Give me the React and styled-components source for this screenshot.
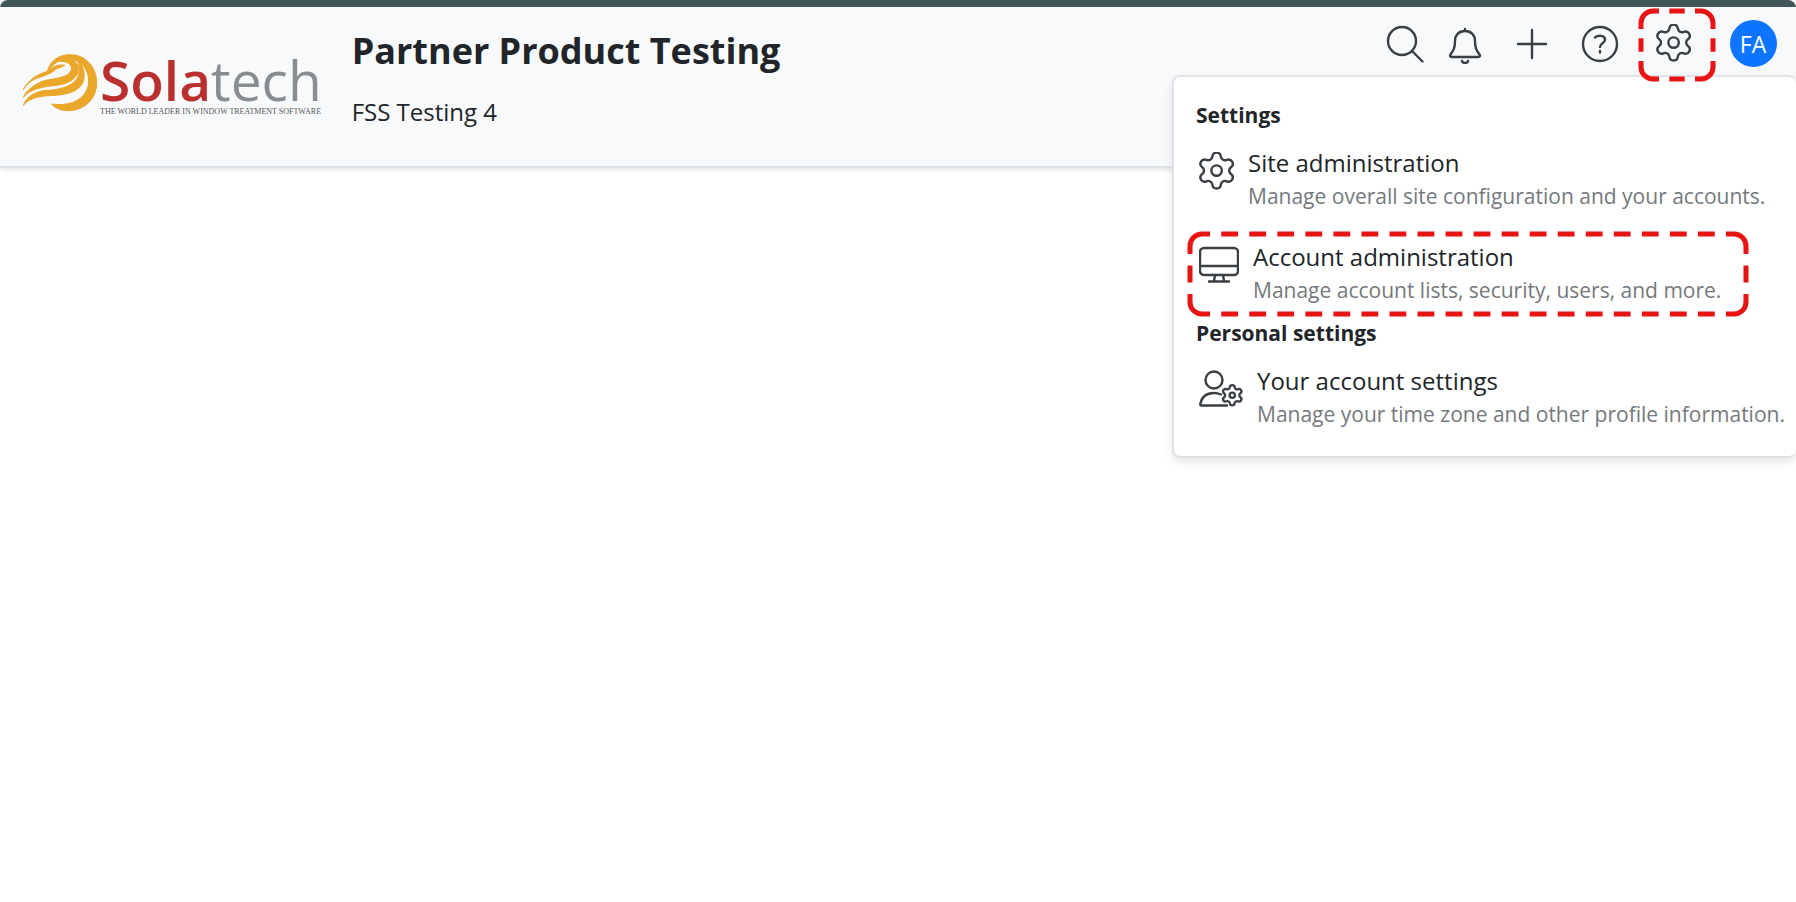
import React, { useState } from "react";
import styled, { createGlobalStyle } from "styled-components";

const GEAR =
  "M9.671 4.136a2.34 2.34 0 0 1 4.659 0 2.34 2.34 0 0 0 3.319 1.915 2.34 2.34 0 0 1 2.33 4.033 2.34 2.34 0 0 0 0 3.831 2.34 2.34 0 0 1-2.33 4.033 2.34 2.34 0 0 0-3.319 1.915 2.34 2.34 0 0 1-4.659 0 2.34 2.34 0 0 0-3.32-1.915 2.34 2.34 0 0 1-2.33-4.033 2.34 2.34 0 0 0 0-3.831A2.34 2.34 0 0 1 6.35 6.051a2.34 2.34 0 0 0 3.319-1.915";

const Icon = ({ width = 40, height = 40, children }) => (
  <Svg width={width} height={height} viewBox={`0 0 ${width} ${height}`} aria-hidden="true">
    {children}
  </Svg>
);

const SearchIcon = () => (
  <Icon>
    <circle cx="17" cy="17" r="14" />
    <path d="M27 27l10.500 10.500" />
  </Icon>
);

const BellIcon = () => (
  <Icon>
    <path d="M19 7c-6.500 0-10 4.500-10 10 0 7-1.500 9.500-4.500 13.500-1 1.500-.5 2.500 1.200 2.500h26.600c1.700 0 2.200-1 1.200-2.500-3-4-4.500-6.500-4.500-13.500 0-5.500-3.500-10-10-10zM19 7V5" />
    <path d="M16 37c.5 2.700 5.500 2.700 6 0" />
  </Icon>
);

const PlusIcon = () => (
  <Icon>
    <path d="M19 6v28M5 20h28" />
  </Icon>
);

const HelpIcon = () => (
  <Icon>
    <circle cx="19" cy="20" r="17" />
    <path d="M14 13.500c3-2.500 10-2.500 10 2 0 4-5 3.500-5 7.500" />
    <path d="M19 27v1.500" />
  </Icon>
);

const GearIcon = () => (
  <Icon width={35} height={40}>
    <g transform="translate(-4 -3) scale(1.800)" strokeWidth="1.350">
      <path d={GEAR} />
      <circle cx="12" cy="12" r="2.900" />
    </g>
  </Icon>
);

const MonitorIcon = () => (
  <Icon width={40}>
    <rect x="1" y="2" width="38" height="27" rx="4" />
    <path d="M1 20h38M16 29l-1 6M24 29l1 6M10 35.500h20" />
  </Icon>
);

const UserGearIcon = () => (
  <Icon width={44}>
    <circle cx="15" cy="10" r="8.500" />
    <path d="M22 24.500c-2-.9-4.500-1.500-7-1.500-8 0-12.500 4.500-13.700 11.200-.1.800.2 1.300 1 1.300H28" />
    <g transform="translate(21 13) scale(1.020)" strokeWidth="2.300">
      <path d={GEAR} />
      <circle cx="12" cy="12" r="2.600" />
    </g>
  </Icon>
);

const Globe = () => (
  <svg
    width="76"
    height="58"
    viewBox="21 28 228 174"
    fill="#eaa72a"
    stroke="#eaa72a"
    strokeWidth="3"
    strokeLinejoin="round"
    aria-hidden="true"
  >
    <path d="M97 80C105 48 132 30 165 30c50 0 80 40 80 85 0 50-40 83-85 83-22 0-42-8-50-20 55 8 102-13 110-58 6-35-15-68-50-76-25-4-50 6-73 36z" />
    <path d="M25 182c10-27 35-39 60-44 45-2 85-10 102-38 7-14 7-34 3-50 16 16 23 42 13 65-15 28-53 37-103 38-30 2-60 9-75 29z" />
    <path d="M25 158c10-23 35-40 63-50 37-8 72-10 80-30 6-16-8-28-33-28 25-12 50-5 55 16 3 29-20 49-60 55-45 5-85 11-105 37z" />
    <path d="M25 135c15-30 45-47 72-55 15-15 33-22 53-18-10 6-25 10-28 12-12 14-42 21-62 29-15 7-27 17-35 32z" />
  </svg>
);

// Rounded rectangle of dashes with solid corners
const Highlight = ({ width, height, top, left, across, arm }) => {
  const r = 12;
  const edge = 3;
  const right = width - edge;
  const bottom = height - edge;
  const w = width - (edge + arm) * 2;
  const h = height - (edge + arm) * 2;
  const dashLength = (length, count) => length / (count + (count + 1) * 0.67);
  const dx = dashLength(w, across);
  const dy = dashLength(h, 1);

  return (
    <Outline $top={top} $left={left} width={width} height={height} aria-hidden="true">
      <path
        d={`M${edge} ${edge + arm}V${edge + r}a${r} ${r} 0 0 1 ${r} ${-r}H${edge + arm}
        M${right - arm} ${edge}H${right - r}a${r} ${r} 0 0 1 ${r} ${r}V${edge + arm}
        M${right} ${bottom - arm}V${bottom - r}a${r} ${r} 0 0 1 ${-r} ${r}H${right - arm}
        M${edge + arm} ${bottom}H${edge + r}a${r} ${r} 0 0 1 ${-r} ${-r}V${bottom - arm}`}
      />
      <path
        d={`M${edge + arm} ${edge}h${w}M${edge + arm} ${bottom}h${w}`}
        strokeDasharray={`${dx} ${dx * 0.67}`}
        strokeDashoffset={dx}
      />
      <path
        d={`M${edge} ${edge + arm}v${h}M${right} ${edge + arm}v${h}`}
        strokeDasharray={`${dy} ${dy * 0.67}`}
        strokeDashoffset={dy}
      />
    </Outline>
  );
};

const MenuItem = ({ icon, title, text, children }) => (
  <Item>
    <ItemLink href="#">
      {icon}
      <span>
        <ItemTitle>{title}</ItemTitle>
        <ItemText>{text}</ItemText>
      </span>
    </ItemLink>
    {children}
  </Item>
);

const App = () => {
  const [open, setOpen] = useState(true);

  return (
    <Page>
      <GlobalStyle />
      <Header>
        <Logo href="#" aria-label="Solatech">
          <Globe />
          <LogoText>
            <LogoName>
              Sola<span>tech</span>
            </LogoName>
            <Tagline>THE WORLD LEADER IN WINDOW TREATMENT SOFTWARE</Tagline>
          </LogoText>
        </Logo>
        <Titles>
          <Title>Partner Product Testing</Title>
          <Subtitle>FSS Testing 4</Subtitle>
        </Titles>
        <Tools>
          <ToolButton aria-label="Search"><SearchIcon /></ToolButton>
          <ToolButton aria-label="Notifications"><BellIcon /></ToolButton>
          <ToolButton aria-label="Create"><PlusIcon /></ToolButton>
          <ToolButton aria-label="Help"><HelpIcon /></ToolButton>
          <ToolButton aria-label="Settings" aria-expanded={open} onClick={() => setOpen(!open)}>
            <GearIcon />
            <Highlight width={78} height={74} top={-16} left={-18} across={1} arm={18} />
          </ToolButton>
          <Avatar aria-label="Profile">FA</Avatar>
        </Tools>
        {open && (
          <Menu>
            <MenuHeading>Settings</MenuHeading>
            <List>
              <MenuItem
                icon={<GearIcon />}
                title="Site administration"
                text="Manage overall site configuration and your accounts."
              />
              <MenuItem
                icon={<MonitorIcon />}
                title="Account administration"
                text="Manage account lists, security, users, and more."
              >
                <Highlight width={562} height={86} top={-9} left={-9} across={18} arm={20} />
              </MenuItem>
            </List>
            <MenuHeading>Personal settings</MenuHeading>
            <List>
              <MenuItem
                icon={<UserGearIcon />}
                title="Your account settings"
                text="Manage your time zone and other profile information."
              />
            </List>
          </Menu>
        )}
      </Header>
    </Page>
  );
};

// Styled components
const GlobalStyle = createGlobalStyle`
  * {
    box-sizing: border-box;
  }

  body {
    margin: 0;
    background: #fff;
    color: #212529;
    font-family: "Open Sans", "Noto Sans", sans-serif;
  }
`;

const Page = styled.div`
  min-height: 100vh;
  overflow: hidden;
  border-radius: 8px;
`;

const Header = styled.header`
  position: relative;
  display: flex;
  align-items: flex-start;
  padding-bottom: 36px;
  border-top: 7px solid #43565c;
  border-bottom: 2px solid #dfe1e8;
  background: #f8f9fb;
  box-shadow: 0 2px 4px rgba(0, 0, 0, 0.1);
`;

const Logo = styled.a`
  display: flex;
  gap: 2px;
  padding: 47px 0 0 22px;
  text-decoration: none;
`;

const LogoText = styled.span`
  display: flex;
  flex-direction: column;
`;

const LogoName = styled.span`
  color: #b9302f;
  font-size: 55px;
  font-weight: 600;
  line-height: 52px;

  span {
    color: #898d8f;
    font-weight: 500;
  }
`;

const Tagline = styled.span`
  color: #55575a;
  font-family: "Liberation Serif", serif;
  font-size: 8px;
  line-height: 12px;
  white-space: nowrap;
`;

const Titles = styled.div`
  margin-left: 30px;
  padding-top: 18px;
`;

const Title = styled.h1`
  margin: 0;
  font-size: 36px;
  font-weight: bold;
  line-height: 52px;
`;

const Subtitle = styled.p`
  margin: 17px 0 0;
  font-size: 24px;
  line-height: 36px;
`;

const Tools = styled.nav`
  display: grid;
  grid-template-columns: 56px 66px 68px 68px 76px 84px;
  justify-items: center;
  align-items: center;
  margin-left: auto;
  padding: 13px 1px 0 0;
`;

const ToolButton = styled.button`
  position: relative;
  display: flex;
  padding: 0;
  border: none;
  background: none;
  cursor: pointer;
`;

const Svg = styled.svg`
  flex: none;
  fill: none;
  stroke: #3a3f44;
  stroke-width: 2.4px;
  stroke-linecap: round;
  stroke-linejoin: round;
`;

const Outline = styled.svg`
  position: absolute;
  z-index: 2;
  top: ${(props) => props.$top}px;
  left: ${(props) => props.$left}px;
  fill: none;
  stroke: #e81313;
  stroke-width: 5px;
  pointer-events: none;
`;

const Avatar = styled.button`
  width: 47px;
  height: 47px;
  padding: 0;
  border: none;
  border-radius: 50%;
  background: #0d75ff;
  color: #fff;
  font-family: inherit;
  font-size: 23px;
  cursor: pointer;
`;

const Menu = styled.div`
  position: absolute;
  top: 68px;
  right: 0;
  z-index: 1;
  width: 624px;
  padding: 23px 0 26px 22px;
  border: 2px solid #dfe3e8;
  border-right: none;
  border-radius: 8px;
  background: #fff;
  box-shadow: 0 4px 8px rgba(0, 0, 0, 0.1);
`;

const MenuHeading = styled.h2`
  margin: 0 0 16px;
  font-size: 21px;
  font-weight: bold;
  line-height: 30px;

  ul + & {
    margin-top: 12px;
  }
`;

const List = styled.ul`
  display: flex;
  flex-direction: column;
  gap: 28px;
  margin: 0;
  padding: 0;
  list-style: none;
`;

const Item = styled.li`
  position: relative;
`;

const ItemLink = styled.a`
  display: flex;
  align-items: flex-start;
  gap: 14px;
  padding-left: 3px;
  color: inherit;
  text-decoration: none;

  > svg {
    margin-top: 6px;
  }
`;

const ItemTitle = styled.span`
  display: block;
  font-size: 24px;
  line-height: 34px;
`;

const ItemText = styled.span`
  display: block;
  color: #75797d;
  font-size: 21px;
  line-height: 32px;
  white-space: nowrap;
`;

export default App;
